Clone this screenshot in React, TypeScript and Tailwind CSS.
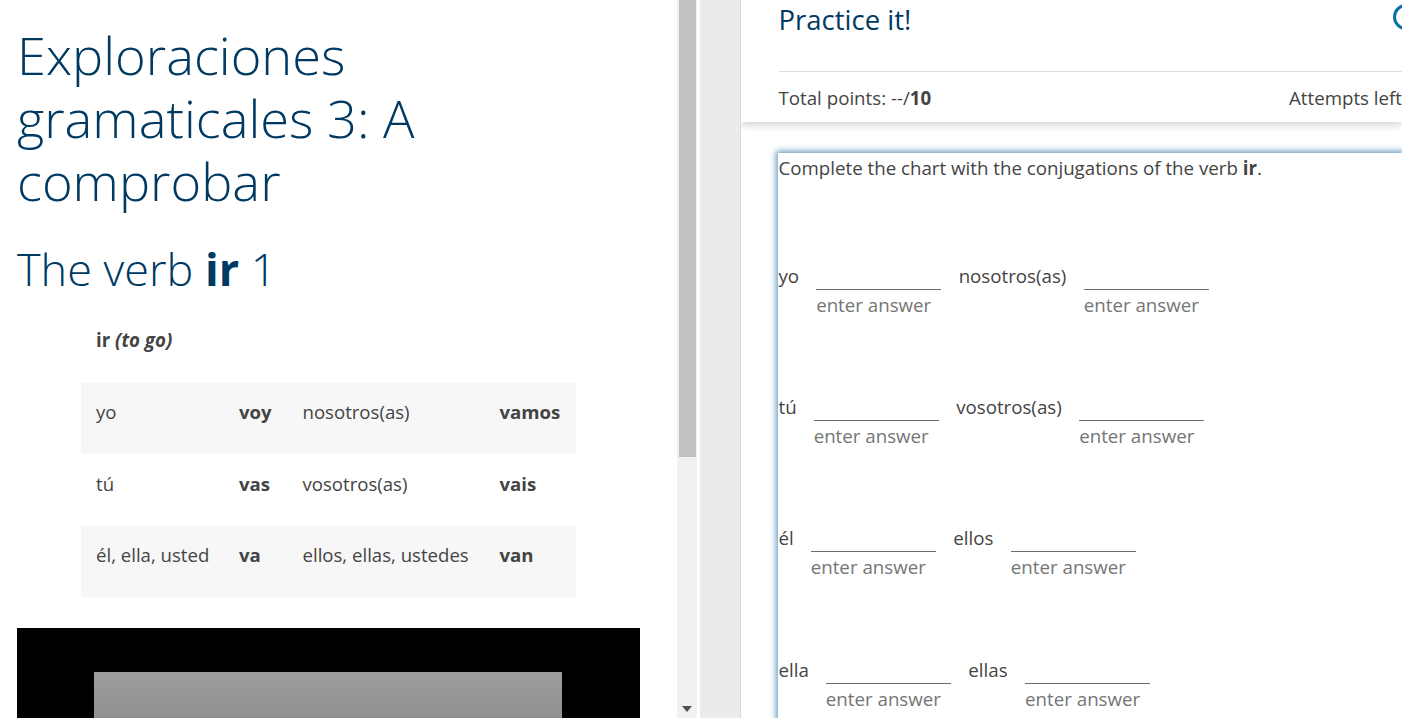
const font = { fontFamily: '"Open Sans", sans-serif' };

const verbRows = [
  ["yo", "voy", "nosotros(as)", "vamos"],
  ["tú", "vas", "vosotros(as)", "vais"],
  ["él, ella, usted", "va", "ellos, ellas, ustedes", "van"],
];

const chartRows = [
  ["yo", "nosotros(as)"],
  ["tú", "vosotros(as)"],
  ["él", "ellos"],
  ["ella", "ellas"],
];

function Blank() {
  return (
    <div className="flex flex-col w-[125px]">
      <div className="h-[28px] border-b border-[#6f6f6f]" />
      <div className="h-[29px] leading-[29px] text-[#757575]">enter answer</div>
    </div>
  );
}

function ChartRow({ left, right }: { left: string; right: string }) {
  return (
    <div className="flex items-start h-[131.2px]">
      <span className="mr-[17px]">{left}</span>
      <Blank />
      <span className="mx-[17.5px]">{right}</span>
      <Blank />
    </div>
  );
}

function LeftPane() {
  return (
    <div className="w-[677px] shrink-0 h-full overflow-hidden pl-[17px] text-[#444444]">
      <h1 className="w-[623px] pt-[23px] text-[52.4px] leading-[63px] font-light text-[#003a63]">
        Exploraciones gramaticales 3: A comprobar
      </h1>
      <h2 className="mt-[29px] text-[45px] leading-[56px] font-light text-[#003a63]">
        The verb <b className="font-bold">ir</b> 1
      </h2>
      <div className="ml-[64px] w-[495px]">
        <div className="h-[86px] pl-[15px] pt-[29px] text-[18.72px] leading-[28px] font-bold">
          ir <i>(to go)</i>
        </div>
        <div className="bg-[#f7f7f7]">
          {verbRows.map((row, i) => (
            <div
              key={row[0]}
              className={`flex items-center h-[71.3px] pb-[13px] text-[18.6px] ${i === 1 ? "bg-white" : ""}`}
            >
              <span className="w-[158px] pl-[15px]">{row[0]}</span>
              <span className="w-[63.5px] font-bold">{row[1]}</span>
              <span className="w-[197px]">{row[2]}</span>
              <span className="font-bold">{row[3]}</span>
            </div>
          ))}
        </div>
      </div>
      <div className="mt-[31px] w-[623px] h-[200px] bg-black pt-[44px] pl-[77px]">
        <div className="w-[468px] h-[60px] bg-gradient-to-b from-[#9c9c9c] to-[#8c8c8c]" />
      </div>
    </div>
  );
}

function Scrollbar() {
  return (
    <div className="relative w-[20px] shrink-0 h-full bg-[#f1f1f1]">
      <div className="ml-[2px] w-[17px] h-[457px] bg-[#c1c1c1]" />
      <div className="absolute bottom-[6px] left-[5px] w-0 h-0 border-x-[5px] border-x-transparent border-t-[6px] border-t-[#505050]" />
    </div>
  );
}

function RightPane() {
  return (
    <div className="flex-1 min-w-0 h-full overflow-hidden text-[#444444] text-[18.72px]">
      <div className="relative z-10 h-[122px] pl-[37.5px] bg-white shadow-[0_3px_8px_rgba(0,0,0,0.18)]">
        <div className="h-[72px] border-b border-[#dddddd] pt-[1px] text-[27.5px] leading-[38px] text-[#003a63]">
          Practice it!
        </div>
        <div className="flex justify-between whitespace-nowrap pt-[12px] leading-[28px]">
          <span>
            Total points: --/<b>10</b>
          </span>
          <span className="w-[113px] overflow-hidden shrink-0">Attempts left</span>
        </div>
        <div className="absolute left-[652px] top-[4px] w-[26px] h-[26px] rounded-full border-[3px] border-[#0a6ea8]" />
      </div>
      <div className="ml-[37px] mt-[31px] pl-[0.5px] h-[600px] shadow-[0_0_6px_2px_rgba(40,115,170,0.7)] bg-white">
        <div className="h-[109px] leading-[30px]">
          Complete the chart with the conjugations of the verb <b>ir</b>.
        </div>
        {chartRows.map((row) => (
          <ChartRow key={row[0]} left={row[0]} right={row[1]} />
        ))}
      </div>
    </div>
  );
}

export default function App() {
  return (
    <div className="flex w-[1402px] h-[718px] overflow-hidden bg-white" style={font}>
      <LeftPane />
      <Scrollbar />
      <div className="w-[3px] shrink-0 bg-white" />
      <div className="w-[41px] shrink-0 h-full bg-[#ebebeb] border-r border-[#d9d9d9]" />
      <RightPane />
    </div>
  );
}
